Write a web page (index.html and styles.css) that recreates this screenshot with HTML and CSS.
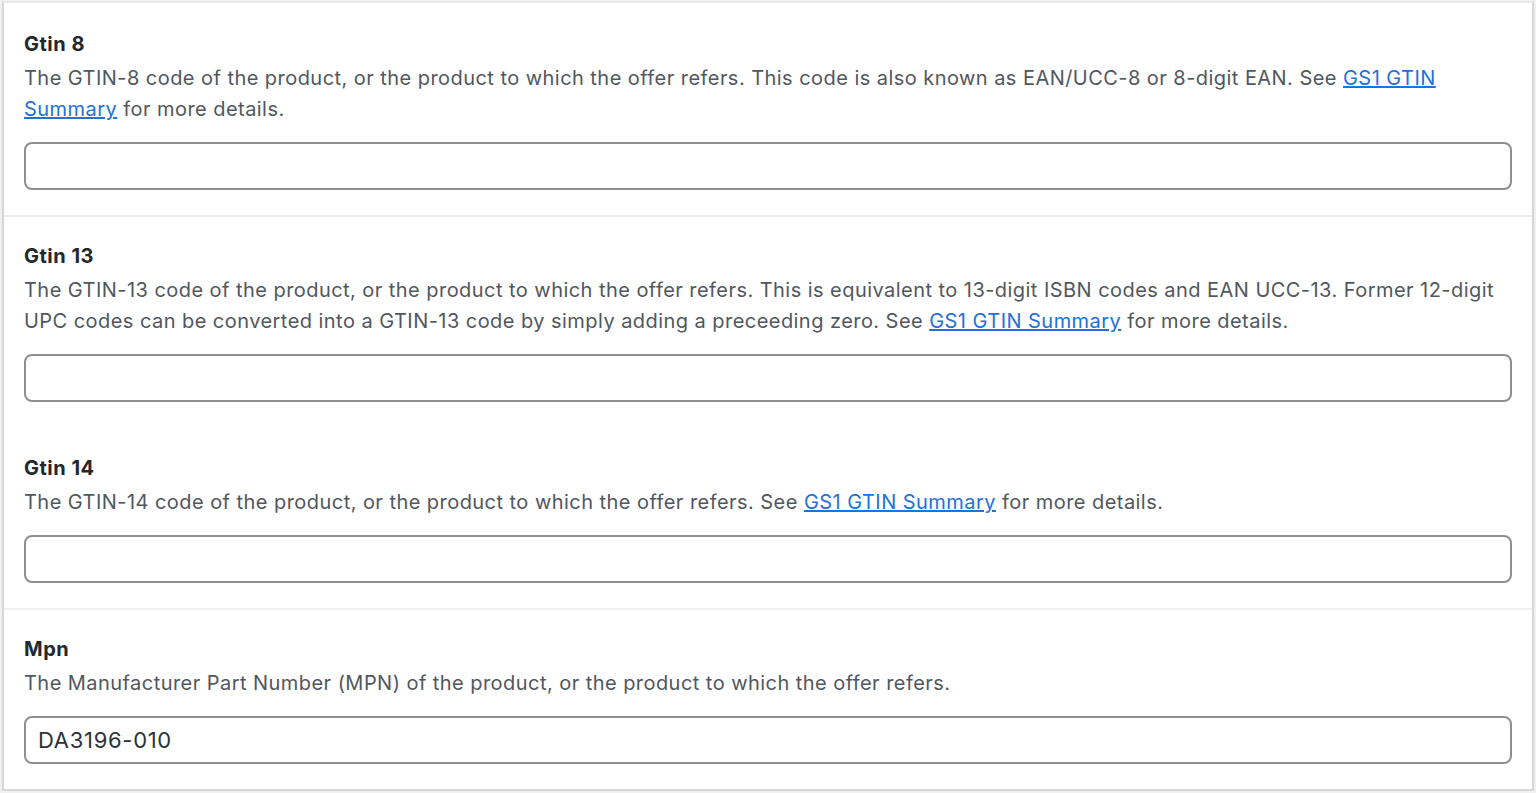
FILE: index.html
```html
<!DOCTYPE html>
<html lang="en">
<head>
  <meta charset="UTF-8" />
  <title>Product identifiers</title>
  <link rel="stylesheet" href="styles.css">
</head>
<body>
  <div class="panel">

    <!-- Gtin 8 -->
    <div class="field-group">
      <label class="field-label" for="gtin8">Gtin 8</label>
      <p class="field-desc">The GTIN-8 code of the product, or the product to which the offer refers. This code is also known as EAN/UCC-8 or 8-digit EAN. See <a href="#">GS1 GTIN Summary</a> for more details.</p>
      <input class="field-input" id="gtin8" type="text">
    </div>

    <!-- Gtin 13 -->
    <div class="field-group plain">
      <label class="field-label" for="gtin13">Gtin 13</label>
      <p class="field-desc">The GTIN-13 code of the product, or the product to which the offer refers. This is equivalent to 13-digit ISBN codes and EAN UCC-13. Former 12-digit UPC codes can be converted into a GTIN-13 code by simply adding a preceeding zero. See <a href="#">GS1 GTIN Summary</a> for more details.</p>
      <input class="field-input" id="gtin13" type="text">
    </div>

    <!-- Gtin 14 -->
    <div class="field-group">
      <label class="field-label" for="gtin14">Gtin 14</label>
      <p class="field-desc">The GTIN-14 code of the product, or the product to which the offer refers. See <a href="#">GS1 GTIN Summary</a> for more details.</p>
      <input class="field-input" id="gtin14" type="text">
    </div>

    <!-- Mpn -->
    <div class="field-group">
      <label class="field-label" for="mpn">Mpn</label>
      <p class="field-desc">The Manufacturer Part Number (MPN) of the product, or the product to which the offer refers.</p>
      <input class="field-input" id="mpn" type="text" value="DA3196-010">
    </div>

  </div>
</body>
</html>
```

FILE: styles.css
```css
body {
  margin: 0;
  background: #f0f0f1;
  font-family: Inter, 'Noto Sans', sans-serif;
}
.panel {
  margin: 1px 2px 0 2px;
  background: #fff;
  border: 2px solid #d6d7d9;
  border-top-color: #e8e9ea;
}
.field-group {
  padding: 25px 20px 25px 20px;
  display: flex;
  flex-direction: column;
  border-bottom: 2px solid #eeeff0;
}
.field-group:first-child {
  padding-top: 27px;
}
.field-group.plain {
  border-bottom-color: #fff;
}
.field-group:last-child {
  border-bottom: none;
}
.field-label {
  font-size: 20px;
  font-weight: 700;
  letter-spacing: 0.5px;
  line-height: 28px;
  color: #23282d;
}
.field-desc {
  margin: 5px 0 0 0;
  font-size: 20px;
  letter-spacing: 0.45px;
  line-height: 31px;
  color: #50575e;
}
.field-desc a {
  color: #2271d8;
  text-decoration: underline;
}
.field-input {
  margin-top: 17px;
  height: 48px;
  box-sizing: border-box;
  border: 2px solid #8c8f94;
  border-radius: 8px;
  padding: 0 12px;
  font-family: inherit;
  font-size: 22px;
  letter-spacing: 0.7px;
  color: #2c3338;
  background: #fff;
}
```
